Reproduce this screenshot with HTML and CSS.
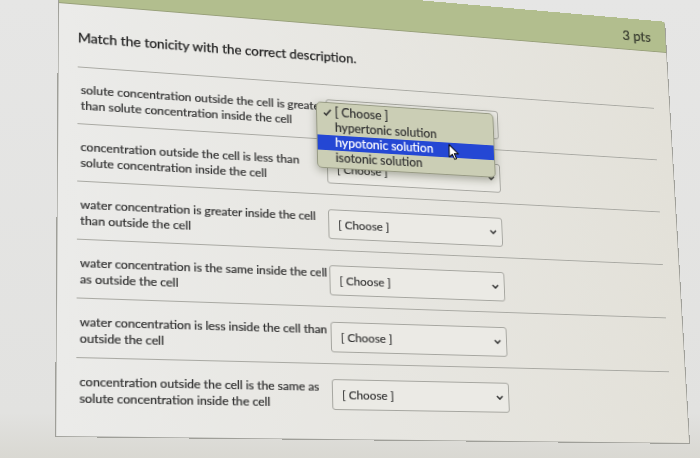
FILE: index.html
```html
<!DOCTYPE html>
<html>
<head>
<meta charset="utf-8">
<link rel="stylesheet" href="styles.css">
</head>
<body>
<div class="card">
  <div class="header"><span class="pts">3 pts</span></div>
  <div class="title">Match the tonicity with the correct description.</div>
  <div class="rows">
    <div class="row">
      <div class="label">solute concentration outside the cell is greater<br>than solute concentration inside the cell</div>
      <div class="select-wrap open">
        <div class="select"><span class="choose">[ Choose ]</span><svg class="chev" width="8" height="5" viewBox="0 0 8 5"><path d="M1 1 L4 4 L7 1" fill="none" stroke="#333" stroke-width="1.6"/></svg></div>
        <div class="menu">
          <div class="opt"><svg class="check" width="9" height="8" viewBox="0 0 9 8"><path d="M1 4.5 L3.3 6.8 L8 1" fill="none" stroke="#333" stroke-width="1.6"/></svg>[ Choose ]</div>
          <div class="opt">hypertonic solution</div>
          <div class="opt active">hypotonic solution</div>
          <div class="opt">isotonic solution</div>
          <svg class="cursor" width="12" height="18" viewBox="0 0 12 18"><path d="M1 1 L1 14.5 L4.3 11.4 L6.6 16.6 L8.6 15.7 L6.4 10.6 L10.8 10.6 Z" fill="#fff" stroke="#111" stroke-width="1.1" stroke-linejoin="round"/></svg>
        </div>
      </div>
    </div>
    <div class="row">
      <div class="label">concentration outside the cell is less than<br>solute concentration inside the cell</div>
      <div class="select-wrap">
        <div class="select"><span class="choose">[ Choose ]</span><svg class="chev" width="8" height="5" viewBox="0 0 8 5"><path d="M1 1 L4 4 L7 1" fill="none" stroke="#333" stroke-width="1.6"/></svg></div>
      </div>
    </div>
    <div class="row">
      <div class="label">water concentration is greater inside the cell<br>than outside the cell</div>
      <div class="select-wrap">
        <div class="select"><span class="choose">[ Choose ]</span><svg class="chev" width="8" height="5" viewBox="0 0 8 5"><path d="M1 1 L4 4 L7 1" fill="none" stroke="#333" stroke-width="1.6"/></svg></div>
      </div>
    </div>
    <div class="row">
      <div class="label">water concentration is the same inside the cell<br>as outside the cell</div>
      <div class="select-wrap">
        <div class="select"><span class="choose">[ Choose ]</span><svg class="chev" width="8" height="5" viewBox="0 0 8 5"><path d="M1 1 L4 4 L7 1" fill="none" stroke="#333" stroke-width="1.6"/></svg></div>
      </div>
    </div>
    <div class="row">
      <div class="label">water concentration is less inside the cell than<br>outside the cell</div>
      <div class="select-wrap">
        <div class="select"><span class="choose">[ Choose ]</span><svg class="chev" width="8" height="5" viewBox="0 0 8 5"><path d="M1 1 L4 4 L7 1" fill="none" stroke="#333" stroke-width="1.6"/></svg></div>
      </div>
    </div>
    <div class="row last">
      <div class="label">concentration outside the cell is the same as<br>solute concentration inside the cell</div>
      <div class="select-wrap">
        <div class="select"><span class="choose">[ Choose ]</span><svg class="chev" width="8" height="5" viewBox="0 0 8 5"><path d="M1 1 L4 4 L7 1" fill="none" stroke="#333" stroke-width="1.6"/></svg></div>
      </div>
    </div>
  </div>
</div>
</body>
</html>
```
FILE: styles.css
```css
html, body {
  margin: 0;
  padding: 0;
  overflow: hidden;
  width: 700px;
  height: 458px;
  background: linear-gradient(180deg, #e6e6e5 0%, #e2e2e0 90%, #d9d8d2 100%);
  font-family: Lato, "Liberation Sans", sans-serif;
  color: #333;
}

.card {
  box-sizing: border-box;
  width: 640px;
  height: 465px;
  border: 1px solid #9f9f99;
  background: linear-gradient(90deg, #ebebe9 0%, #e7e6e1 50%, #e3e1d9 100%);
  transform-origin: 0 0;
  transform: matrix3d(1.067313, 0.087322, 0, 0.00017353, -0.012728, 0.961381, 0, -0.00010457, 0, 0, 1, 0, 58.4328, -29.687, 0, 1.0035555);
}

.header {
  box-sizing: border-box;
  height: 36px;
  margin-top: -3px;
  padding-top: 3px;
  background: #b2be8e;
  border-bottom: 1px solid #98a07a;
  display: flex;
  align-items: center;
  justify-content: flex-end;
  padding-right: 17px;
}

.pts {
  font-size: 15px;
  color: #363a2e;
  -webkit-text-stroke: 0.2px #363a2e;
}

.title {
  margin: 0 18px;
  padding: 25px 0 21px;
  line-height: 18px;
  font-size: 13.4px;
  color: #222;
  white-space: nowrap;
  -webkit-text-stroke: 0.25px #222;
}

.rows {
  margin: 0 18px;
  padding-bottom: 18px;
}

.row {
  box-sizing: border-box;
  height: 58px;
  border-top: 1px solid #a9a9a3;
  display: flex;
  align-items: center;
  padding-top: 4px;
}

.label {
  flex: 0 0 241px;
  min-width: 0;
  padding-left: 3px;
  box-sizing: border-box;
  font-size: 11.8px;
  line-height: 16px;
  white-space: nowrap;
  color: #2e2e2e;
  -webkit-text-stroke: 0.2px #2e2e2e;
}

.select-wrap {
  position: relative;
  flex: 0 0 182px;
  margin-left: 3px;
}

.select-wrap.open {
  z-index: 5;
}

.select {
  box-sizing: border-box;
  height: 31px;
  border: 1px solid #a6a6a0;
  border-radius: 3px;
  background: #ebeae5;
  display: flex;
  align-items: center;
  justify-content: space-between;
  padding: 0 5px 0 9px;
}

.choose {
  font-size: 11.8px;
  color: #333;
  -webkit-text-stroke: 0.15px #333;
}

.chev {
  display: block;
}

.menu {
  position: absolute;
  left: -10px;
  top: 3px;
  width: 187px;
  height: 70px;
  box-sizing: border-box;
  padding: 2px 0 2px;
  background: #cbceb5;
  border: 1px solid #979a84;
  border-radius: 5px;
  box-shadow: 0 3px 9px rgba(40, 45, 20, 0.35);
}

.opt {
  position: relative;
  height: 16px;
  line-height: 16px;
  padding-left: 18px;
  font-size: 12.5px;
  color: #333;
  white-space: nowrap;
  -webkit-text-stroke: 0.2px #333;
}

.opt.active {
  background: #2447d4;
  color: #fff;
  -webkit-text-stroke: 0.2px #fff;
}

.check {
  position: absolute;
  left: 6px;
  top: 4px;
}

.cursor {
  position: absolute;
  left: 136px;
  top: 35px;
}
```
